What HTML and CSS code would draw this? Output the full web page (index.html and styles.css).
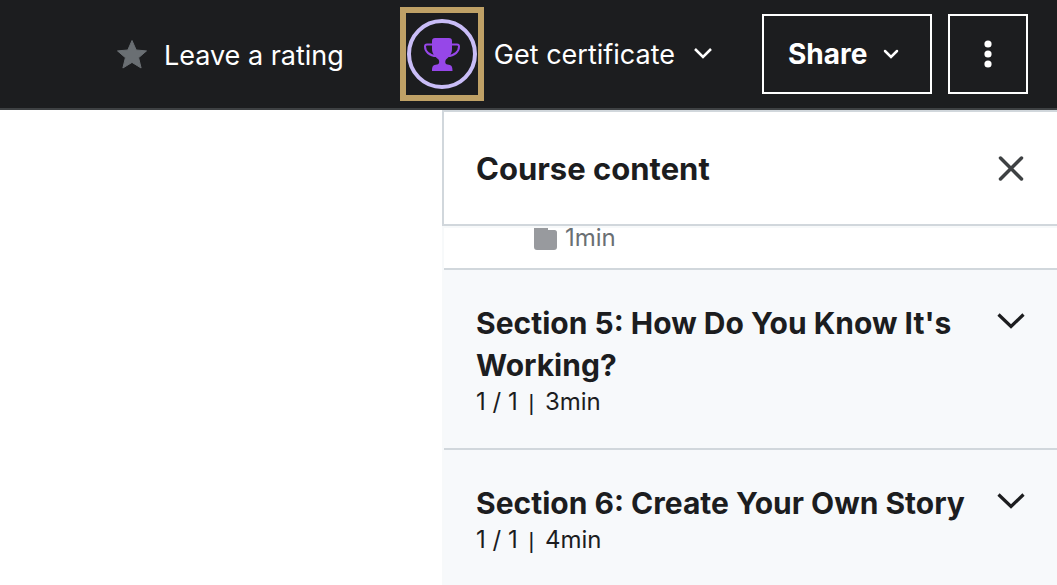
FILE: index.html
```html
<!DOCTYPE html>
<html lang="en">
<head>
    <meta charset="UTF-8">
    <meta name="viewport" content="width=device-width, initial-scale=1.0">
    <title>Course content</title>
    <link rel="stylesheet" href="styles.css">
</head>
<body>
    <header class="topbar">
        <button class="link-button rating">
            <svg width="32" height="32" viewBox="0 0 32 32" aria-hidden="true">
                <path fill="#6a6f73" stroke="#6a6f73" stroke-width="1" stroke-linejoin="round" d="M16 .5l4.200 9.500 10.300.9-7.900 6.800 2.500 10.300-9.100-5.600-9.100 5.600 2.500-10.300-7.900-6.800 10.300-.9z"/>
            </svg>
            <span>Leave a rating</span>
        </button>
        <button class="link-button certificate">
            <span class="trophy">
                <svg width="70" height="70" viewBox="0 0 70 70" aria-hidden="true">
                    <circle cx="35" cy="35" r="33" fill="none" stroke="#c9bdf7" stroke-width="4"/>
                    <path fill="#9647e8" d="M28 19h14q3 0 3 3V30c0 5-3 8-5.500 10-1.500 1.200-2 5.300 1 5.600 4 .2 5 1.900 5 6.400H25c0-4.500 1-6.200 5-6.400 3-.3 2.500-4.400 1-5.600-2.500-2-6-5-6-10V22q0-3 3-3z"/>
                    <path fill="none" stroke="#9647e8" stroke-width="2" d="M26 25.500h-6q-2 0-2 2c0 5 4.500 9.500 11.500 9.500M44 25.500h6q2 0 2 2c0 5-4.500 9.500-11.500 9.500"/>
                </svg>
            </span>
            <span>Get certificate</span>
            <svg class="caret" width="20" height="14" viewBox="0 0 20 14" aria-hidden="true">
                <path d="M2 2l8 8 8-8" fill="none" stroke="#fff" stroke-width="2.500"/>
            </svg>
        </button>
        <button class="box-button share">
            <span>Share</span>
            <svg width="16" height="12" viewBox="0 0 16 12" aria-hidden="true">
                <path d="M2 3l6 6 6-6" fill="none" stroke="#fff" stroke-width="2.500" stroke-linecap="round"/>
            </svg>
        </button>
        <button class="box-button more" aria-label="More options">
            <svg width="8" height="28" viewBox="0 0 8 28" aria-hidden="true">
                <g fill="#fff"><circle cx="4" cy="4" r="3.600"/><circle cx="4" cy="14" r="3.600"/><circle cx="4" cy="24" r="3.600"/></g>
            </svg>
        </button>
    </header>

    <div class="layout">
        <main class="player"></main>
        <aside class="sidebar">
            <div class="sidebar-header">
                <h2>Course content</h2>
                <button class="icon-button" aria-label="Close">
                    <svg width="28" height="28" viewBox="0 0 28 28" aria-hidden="true">
                        <path d="M3.500 4l21 21M24.500 4l-21 21" stroke="#3e4143" stroke-width="3.500" stroke-linecap="round"/>
                    </svg>
                </button>
            </div>
            <div class="sections">
                <div class="lesson">
                    <svg width="23" height="22" viewBox="0 0 23 22" aria-hidden="true">
                        <path fill="#989a9e" d="M0 0h14v2h6.500q2.500 0 2.500 2.500V19q0 3-3 3H3q-3 0-3-3z"/>
                    </svg>
                    <span>1min</span>
                </div>
                <section class="section">
                    <div>
                        <h3>Section 5: How Do You Know It's Working?</h3>
                        <p>1 / 1 <span class="divider">|</span> 3min</p>
                    </div>
                    <button class="icon-button" aria-label="Expand section 5">
                        <svg width="28" height="18" viewBox="0 0 28 18" aria-hidden="true">
                            <path d="M1.500 2.500l12.500 12 12.500-12" fill="none" stroke="#1c1d1f" stroke-width="3.200"/>
                        </svg>
                    </button>
                </section>
                <section class="section">
                    <div>
                        <h3>Section 6: Create Your Own Story</h3>
                        <p>1 / 1 <span class="divider">|</span> 4min</p>
                    </div>
                    <button class="icon-button" aria-label="Expand section 6">
                        <svg width="28" height="18" viewBox="0 0 28 18" aria-hidden="true">
                            <path d="M1.500 2.500l12.500 12 12.500-12" fill="none" stroke="#1c1d1f" stroke-width="3.200"/>
                        </svg>
                    </button>
                </section>
            </div>
        </aside>
    </div>
</body>
</html>
```
FILE: styles.css
```css
* {
    box-sizing: border-box;
}

body {
    display: flex;
    flex-direction: column;
    height: 100vh;
    margin: 0;
    background: #fff;
    color: #1c1d1f;
    font-family: Inter, "Liberation Sans", sans-serif;
}

h2, h3, p {
    margin: 0;
}

svg {
    display: block;
    flex: none;
}

button {
    display: flex;
    align-items: center;
    padding: 0;
    border: 0;
    background: none;
    color: inherit;
    font-family: inherit;
    cursor: pointer;
}

.topbar {
    display: flex;
    flex: none;
    align-items: center;
    justify-content: flex-end;
    height: 110px;
    padding: 0 29px;
    border-bottom: 2px solid #3e4143;
    background: #1c1d1f;
    color: #fff;
}

.link-button {
    font-size: 27px;
    white-space: nowrap;
}

.rating {
    gap: 16px;
    margin-right: 56px;
    padding-top: 3px;
}

.certificate {
    gap: 8px;
    margin-right: 49px;
}

.certificate .caret {
    margin-left: 10px;
}

.trophy {
    margin-right: 2px;
    padding: 6px 1px;
    border: 6px solid #bfa166;
}

.box-button {
    justify-content: center;
    height: 80px;
    border: 2px solid #fff;
    font-size: 28px;
    font-weight: 700;
}

.share {
    justify-content: flex-start;
    gap: 16px;
    width: 170px;
    margin-right: 16px;
    padding-left: 24px;
}

.more {
    width: 80px;
}

.layout {
    display: flex;
    flex: 1;
    min-height: 0;
    overflow: hidden;
}

.player {
    flex: 1;
}

.sidebar {
    display: flex;
    flex-direction: column;
    width: 615px;
}

.sidebar-header {
    display: flex;
    flex: none;
    align-items: center;
    justify-content: space-between;
    height: 116px;
    padding: 0 32px;
    border: 2px solid #d1d7dc;
    border-right: 0;
}

.sidebar-header h2 {
    font-size: 31px;
    font-weight: 700;
}

.sections {
    flex: 1;
    border: 2px solid #f7f9fa;
    border-width: 2px 0 0 2px;
}

.lesson {
    display: flex;
    gap: 8px;
    height: 40px;
    padding-left: 90px;
    color: #6a6f73;
    font-size: 24px;
    line-height: 20px;
}

.section {
    display: flex;
    align-items: flex-start;
    justify-content: space-between;
    padding: 32px 32px 30px;
    border-top: 2px solid #d1d7dc;
    background: #f7f9fb;
}

.section h3 {
    font-size: 30px;
    font-weight: 700;
    line-height: 42px;
}

.section p {
    font-size: 24px;
    line-height: 32px;
}

.section .divider {
    margin: 0 4px;
    font-family: "Liberation Sans", sans-serif;
    font-size: 22px;
    line-height: 1;
}

.section .icon-button {
    height: 38px;
}
```
